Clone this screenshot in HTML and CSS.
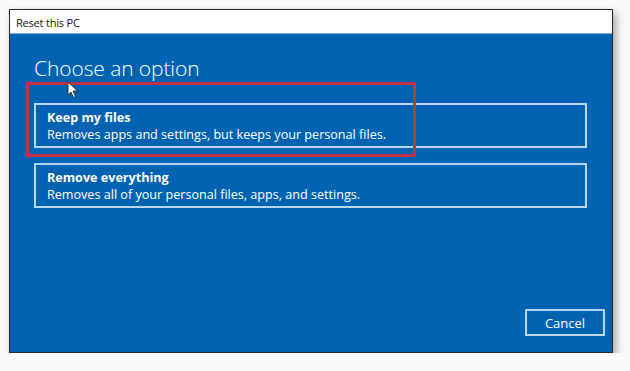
FILE: index.html
```html
<!DOCTYPE html>
<html>
<head>
  <title>Reset this PC</title>
  <link rel="stylesheet" href="styles.css">
</head>
<body>
  <div class="window">
    <div class="titlebar">Reset this PC</div>
    <div class="content">
      <h1 class="heading">Choose an option</h1>
      <div class="options">
        <div class="option">
          <div class="option-title">Keep my files</div>
          <div class="option-desc">Removes apps and settings, but keeps your personal files.</div>
        </div>
        <div class="option">
          <div class="option-title">Remove everything</div>
          <div class="option-desc">Removes all of your personal files, apps, and settings.</div>
        </div>
      </div>
      <div class="actions">
        <button class="cancel">Cancel</button>
      </div>
    </div>
    <!-- highlight drawn over the first option -->
    <div class="highlight"></div>
    <svg class="cursor" width="12" height="18" viewBox="0 0 12 18">
      <path d="M1 1 L1 14 L4 11 L6.5 16.5 L8.5 15.5 L6 10 L10.5 10 Z" fill="#fff" stroke="#222" stroke-width="0.8"/>
    </svg>
  </div>
</body>
</html>
```
FILE: styles.css
```css
* {
  box-sizing: border-box;
}
body {
  margin: 0;
  padding: 9px 0 0 9px;
  background: #fafafa;
  font-family: 'Open Sans', 'Liberation Sans', sans-serif;
}
.window {
  position: relative;
  width: 604px;
  height: 344px;
  border: 1px solid #2b2b2b;
  background: #0063b1;
  box-shadow: 3px 4px 8px rgba(0, 0, 0, 0.35);
  display: flex;
  flex-direction: column;
}
.titlebar {
  height: 24px;
  background: #fff;
  color: #111;
  font-size: 11px;
  padding: 5px 0 0 6px;
  letter-spacing: -0.2px;
  border-bottom: 1px solid #7fb0dc;
}
.content {
  flex: 1;
  display: flex;
  flex-direction: column;
  padding: 20px 25px 16px 24px;
  color: #fff;
}
.heading {
  margin: 0;
  font-size: 21px;
  font-weight: 300;
  line-height: 28px;
  letter-spacing: -0.1px;
}
.options {
  margin-top: 21px;
  display: flex;
  flex-direction: column;
  gap: 15px;
}
.option {
  height: 45px;
  border: 2px solid #b9d6f2;
  padding: 4px 11px 0 11px;
  font-size: 12.6px;
  line-height: 17px;
}
.option-title {
  font-weight: bold;
}
.actions {
  margin-top: auto;
  display: flex;
  justify-content: flex-end;
  margin-right: -18px;
}
.cancel {
  width: 80px;
  height: 27px;
  background: transparent;
  border: 2px solid #b9d6f2;
  color: #fff;
  font-family: 'Open Sans', 'Liberation Sans', sans-serif;
  font-size: 13px;
}
.highlight {
  position: absolute;
  left: 16px;
  top: 72px;
  width: 390px;
  height: 75px;
  border: 3px solid #c3304a;
}
.cursor {
  position: absolute;
  left: 57px;
  top: 71px;
}
```
